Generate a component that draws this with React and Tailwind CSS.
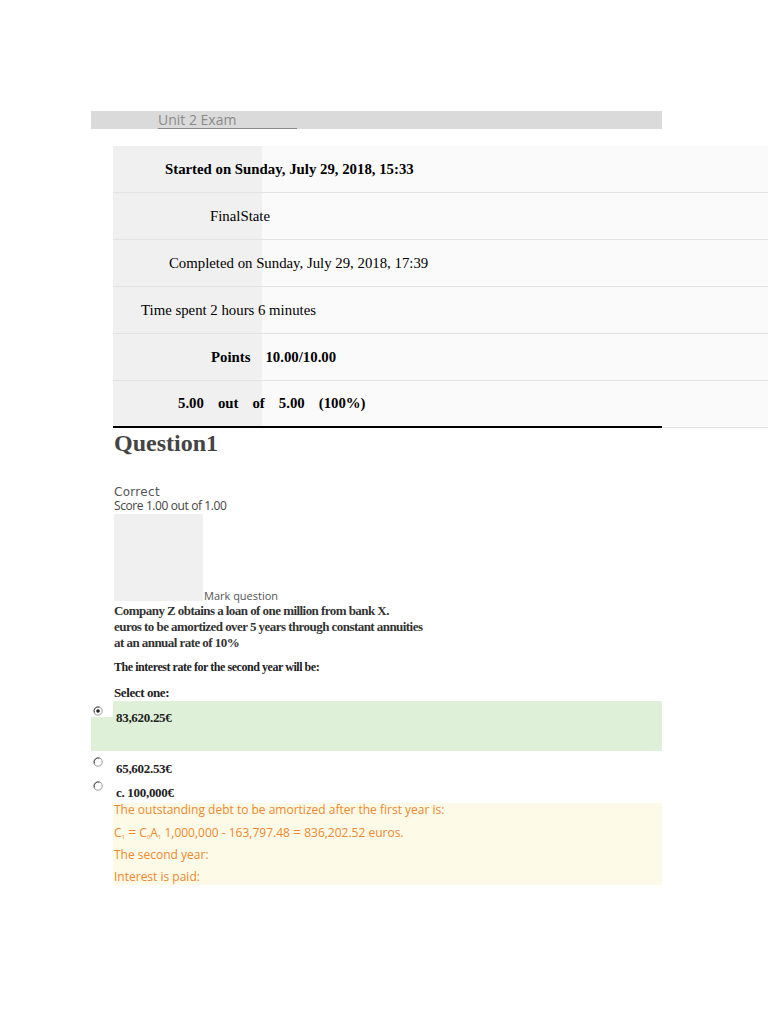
export default function App() {
  const serif = { fontFamily: '"Liberation Serif", "Times New Roman", serif' };
  const rows = [
    { text: "Started on Sunday, July 29, 2018, 15:33", pl: "pl-[52px]", bold: true },
    { text: "FinalState", pl: "pl-[97px]", bold: false },
    { text: "Completed on Sunday, July 29, 2018, 17:39", pl: "pl-[56px]", bold: false },
    { text: "Time spent 2 hours 6 minutes", pl: "pl-[28px]", bold: false },
  ];
  return (
    <div className="min-h-[1024px] w-[768px] bg-white pt-[111px]">
      {/* header bar */}
      <div className="ml-[91px] flex h-[18px] w-[571px] items-center bg-[#dadada]">
        <span
          className="ml-[67px] w-[139px] border-b border-[#888] text-[14px] leading-[16px] text-[#8a8a8a]"
          style={{ fontFamily: '"Open Sans", "DejaVu Sans", sans-serif' }}
        >
          Unit 2 Exam
        </span>
      </div>

      {/* summary table */}
      <div
        className="ml-[113px] mt-[17px] w-[655px] bg-[linear-gradient(to_right,#f0f0f0_149px,#fafafa_149px)] text-[14.8px] text-black"
        style={serif}
      >
        {rows.map((r) => (
          <div
            key={r.text}
            className={`flex h-[47px] items-center border-b border-[#e2e2e2] ${r.pl} ${r.bold ? "font-bold" : ""}`}
          >
            {r.text}
          </div>
        ))}
        <div className="flex h-[47px] items-center border-b border-[#e2e2e2] pl-[98px] font-bold">
          <span>Points</span>
          <span className="ml-[15px]">10.00/10.00</span>
        </div>
        <div className="flex h-[45px] items-center gap-[14px] pl-[65px] font-bold">
          <span>5.00</span>
          <span>out</span>
          <span>of</span>
          <span>5.00</span>
          <span>(100%)</span>
        </div>
      </div>
      <div className="ml-[113px] flex w-[655px]">
        <div className="h-[2px] w-[549px] bg-black" />
        <div className="mt-[1px] h-[1px] flex-1 bg-[#e2e2e2]" />
      </div>

      {/* question */}
      <div className="ml-[114px] w-[548px]">
        <h2 className="mt-[0px] text-[24px] font-bold leading-[30px] text-[#444]" style={serif}>
          Question1
        </h2>
        <div
          className="mt-[28px] text-[12px] leading-[13px] tracking-[0.3px] text-[#555]"
          style={{ fontFamily: '"DejaVu Sans", sans-serif' }}
        >
          Correct
        </div>
        <div
          className="text-[12px] leading-[13px] tracking-[-0.4px] text-[#444]"
          style={{ fontFamily: '"Open Sans", sans-serif' }}
        >
          Score 1.00 out of 1.00
        </div>
        <div className="mt-[2px] flex items-end">
          <div className="h-[87px] w-[89px] bg-[#f0f0f0]" />
          <span
            className="-mb-[1px] ml-[1px] text-[11px] leading-[12px] text-[#555]"
            style={{ fontFamily: '"Open Sans", sans-serif' }}
          >
            Mark question
          </span>
        </div>
        <div
          className="mt-[2px] text-[13px] font-bold leading-[16px] tracking-[-0.55px] text-[#333]"
          style={serif}
        >
          <div>Company Z obtains a loan of one million from bank X.</div>
          <div>euros to be amortized over 5 years through constant annuities</div>
          <div>at an annual rate of 10%</div>
        </div>
        <div
          className="mt-[9px] text-[12px] font-bold leading-[14px] tracking-[-0.45px] text-[#222]"
          style={serif}
        >
          The interest rate for the second year will be:
        </div>
        <div
          className="mt-[12px] text-[13px] font-bold leading-[14px] tracking-[-0.4px] text-[#222]"
          style={serif}
        >
          Select one:
        </div>
      </div>

      {/* answers */}
      <div className="ml-[91px] mt-[1px] w-[571px]" style={serif}>
        <div className="flex h-[50px] bg-[#dff0d8]">
          <div className="h-[16px] w-[22px] bg-white pl-[2px] pt-[5px]">
            <Radio checked />
          </div>
          <div className="ml-[3px] pt-[10px] text-[13px] font-bold leading-[14px] tracking-[-0.3px] text-[#222]">
            83,620.25€
          </div>
        </div>
        <div className="flex h-[24px]">
          <div className="w-[22px] pl-[2px] pt-[6px]">
            <Radio />
          </div>
          <div className="ml-[3px] pt-[11px] text-[13px] font-bold leading-[14px] tracking-[-0.3px] text-[#222]">
            65,602.53€
          </div>
        </div>
        <div className="flex h-[26px]">
          <div className="w-[22px] pl-[2px] pt-[6px]">
            <Radio />
          </div>
          <div className="ml-[3px] pt-[11px] text-[13px] font-bold leading-[14px] tracking-[-0.3px] text-[#222]">
            c. 100,000€
          </div>
        </div>
      </div>

      {/* feedback */}
      <div
        className="ml-[113px] mt-[2px] flex h-[82px] w-[549px] flex-col bg-[#fefae8] pl-[1px] text-[12px] leading-[22px] text-[#f0882a]"
        style={{ fontFamily: '"Open Sans", sans-serif' }}
      >
        <div className="-mt-[4px]">The outstanding debt to be amortized after the first year is:</div>
        <div>
          C<sub className="text-[6px]">1</sub> <span className="text-[14px]">=</span> C
          <sub className="text-[6px]">0</sub>A<sub className="text-[6px]">1</sub> 1,000,000 - 163,797.48{" "}
          <span className="text-[14px]">=</span> 836,202.52 euros.
        </div>
        <div>The second year:</div>
        <div>Interest is paid:</div>
      </div>
    </div>
  );
}

function Radio({ checked }) {
  return (
    <svg width="10" height="10" viewBox="0 0 10 10">
      <circle cx="5" cy="5" r="4.2" fill="white" stroke="#9a9a9a" strokeWidth="1" />
      <path d="M1.5 6.5 A4 4 0 0 1 6.5 1.2" fill="none" stroke="#555" strokeWidth="1" />
      {checked && <circle cx="5" cy="5" r="1.8" fill="#222" />}
    </svg>
  );
}
